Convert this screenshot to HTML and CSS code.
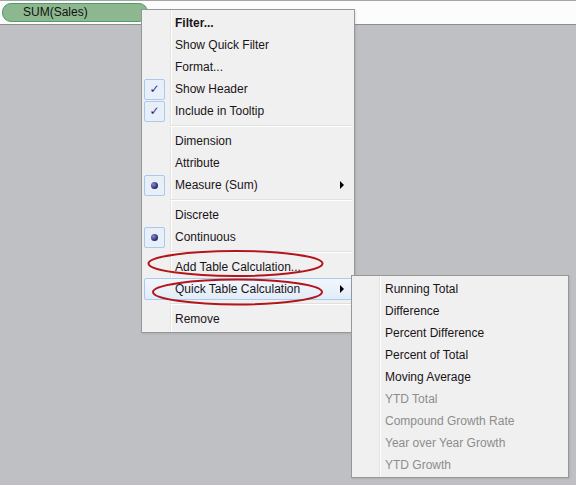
FILE: index.html
```html
<html>
   <head>
      <link rel="stylesheet" href="styles.css">
   </head>
   <body>
      <div class="shelf">
         <div class="pill">SUM(Sales)</div>
      </div>

      <div class="menu mainMenu">
         <div class="item bold"><span class="ic"></span><span class="label">Filter...</span></div>
         <div class="item"><span class="ic"></span><span class="label">Show Quick Filter</span></div>
         <div class="item"><span class="ic"></span><span class="label">Format...</span></div>
         <div class="item"><span class="ic box"><span class="tick">&#10003;</span></span><span class="label">Show Header</span></div>
         <div class="item"><span class="ic box"><span class="tick">&#10003;</span></span><span class="label">Include in Tooltip</span></div>
         <div class="sep"></div>
         <div class="item"><span class="ic"></span><span class="label">Dimension</span></div>
         <div class="item"><span class="ic"></span><span class="label">Attribute</span></div>
         <div class="item"><span class="ic box"><span class="dot"></span></span><span class="label">Measure (Sum)</span><span class="arrow"></span></div>
         <div class="sep"></div>
         <div class="item"><span class="ic"></span><span class="label">Discrete</span></div>
         <div class="item"><span class="ic box"><span class="dot"></span></span><span class="label">Continuous</span></div>
         <div class="sep"></div>
         <div class="item"><span class="ic"></span><span class="label">Add Table Calculation...</span></div>
         <div class="item hover"><span class="ic"></span><span class="label">Quick Table Calculation</span><span class="arrow"></span></div>
         <div class="sep"></div>
         <div class="item"><span class="ic"></span><span class="label">Remove</span></div>
      </div>

      <div class="menu subMenu">
         <div class="item"><span class="label">Running Total</span></div>
         <div class="item"><span class="label">Difference</span></div>
         <div class="item"><span class="label">Percent Difference</span></div>
         <div class="item"><span class="label">Percent of Total</span></div>
         <div class="item"><span class="label">Moving Average</span></div>
         <div class="item off"><span class="label">YTD Total</span></div>
         <div class="item off"><span class="label">Compound Growth Rate</span></div>
         <div class="item off"><span class="label">Year over Year Growth</span></div>
         <div class="item off"><span class="label">YTD Growth</span></div>
      </div>

      <svg class="marks" width="576" height="485">
         <ellipse cx="235.5" cy="263.5" rx="87" ry="12.5" fill="none" stroke="#b3151b" stroke-width="2"/>
         <ellipse cx="237.5" cy="292" rx="84.5" ry="12.5" fill="none" stroke="#b3151b" stroke-width="2"/>
      </svg>
   </body>
</html>
```

FILE: styles.css
```css
body{
margin: 0;
background-color: #bfc0c4;
font-family: "Liberation Sans", Arial, sans-serif;
font-size: 12px;
color: #1a1418;
width: 576px;
height: 485px;
overflow: hidden;
}
.shelf{
background-color: #fcfcfc;
border-top: 1px solid #a4a4a4;
border-bottom: 1px solid #8e8e8e;
padding: 2px 0 0 2px;
height: 21px;
}
.pill{
width: 124px;
height: 17px;
line-height: 17px;
padding-left: 20px;
background-color: #8db88f;
border: 1px solid #4f9d6d;
border-radius: 9px;
color: #111;
}
.menu{
position: absolute;
background-color: #f0f0f0;
border: 1px solid #979797;
box-shadow: 1px 1px 2px rgba(0,0,0,0.10);
padding: 2px;
}
.mainMenu{
left: 141px;
top: 9px;
width: 208px;
background-image: linear-gradient(to right, transparent 28px, #e2e3e3 28px, #e2e3e3 29px, #ffffff 29px, #ffffff 30px, transparent 30px);
}
.subMenu{
left: 351px;
top: 275px;
width: 212px;
padding-bottom: 1px;
background-image: linear-gradient(to right, transparent 27px, #e2e3e3 27px, #e2e3e3 28px, #ffffff 28px, #ffffff 29px, transparent 29px);
}
.item{
display: flex;
align-items: center;
height: 22px;
}
.bold{
font-weight: bold;
}
.ic{
width: 21px;
height: 21px;
display: flex;
align-items: center;
justify-content: center;
box-sizing: border-box;
}
.box{
border: 1px solid #a9c9ee;
border-radius: 2px;
background-color: #e8eff9;
}
.tick{
color: #1f2d8a;
font-family: "DejaVu Sans", sans-serif;
font-size: 12px;
}
.dot{
width: 7px;
height: 7px;
border-radius: 50%;
background: radial-gradient(circle at 35% 35%, #8a8ad0, #24246a 70%);
}
.label{
margin-left: 10px;
flex: 1;
}
.subMenu .label{
margin-left: 31px;
}
.off{
color: #8d8d8d;
}
.arrow{
width: 0;
height: 0;
border-left: 4px solid #000;
border-top: 4px solid transparent;
border-bottom: 4px solid transparent;
margin-right: 8px;
}
.hover{
background: linear-gradient(#f2f6fc, #e2ecf8);
border: 1px solid #aacbf0;
border-radius: 2px;
box-sizing: border-box;
margin-right: -3px;
}
.hover .ic{
margin-left: -1px;
}
.hover .arrow{
margin-right: 10px;
}
.sep{
height: 8px;
margin-left: 26px;
background-image: linear-gradient(#e0e0e0, #e0e0e0), linear-gradient(#ffffff, #ffffff);
background-size: 100% 1px, 100% 1px;
background-position: 0 3px, 0 4px;
background-repeat: no-repeat;
}
.marks{
position: absolute;
left: 0;
top: 0;
pointer-events: none;
}
```
